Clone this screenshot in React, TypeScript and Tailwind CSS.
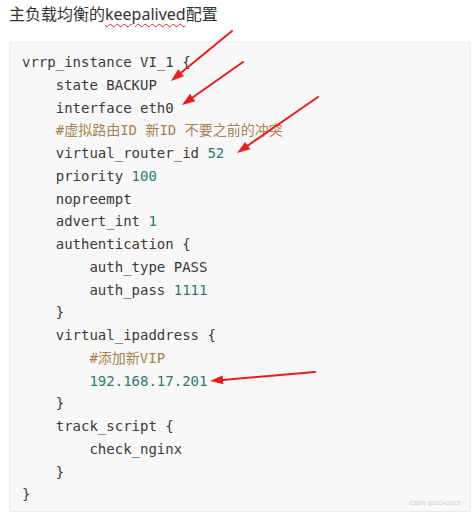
const N = 'text-[#2a7d6b]';
const C = 'text-[#a88250]';

type Seg = { t: string; c?: string };

const lines: Seg[][] = [
  [{ t: 'vrrp_instance VI_1 {' }],
  [{ t: '    state BACKUP' }],
  [{ t: '    interface eth0' }],
  [{ t: '    #虚拟路由ID 新ID 不要之前的冲突', c: C }],
  [{ t: '    virtual_router_id ' }, { t: '52', c: N }],
  [{ t: '    priority ' }, { t: '100', c: N }],
  [{ t: '    nopreempt' }],
  [{ t: '    advert_int ' }, { t: '1', c: N }],
  [{ t: '    authentication {' }],
  [{ t: '        auth_type PASS' }],
  [{ t: '        auth_pass ' }, { t: '1111', c: N }],
  [{ t: '    }' }],
  [{ t: '    virtual_ipaddress {' }],
  [{ t: '        #添加新VIP', c: C }],
  [{ t: '        192.168.17.201', c: N }],
  [{ t: '    }' }],
  [{ t: '    track_script {' }],
  [{ t: '        check_nginx' }],
  [{ t: '    }' }],
  [{ t: '}' }],
];

function Arrow({ x1, y1, x2, y2 }: { x1: number; y1: number; x2: number; y2: number }) {
  const a = Math.atan2(y2 - y1, x2 - x1);
  const len = 13;
  const w = 4.5;
  const bx = x2 - len * Math.cos(a);
  const by = y2 - len * Math.sin(a);
  const px = -Math.sin(a) * w;
  const py = Math.cos(a) * w;
  return (
    <g>
      <line x1={x1} y1={y1} x2={bx} y2={by} stroke="#ee1c1c" strokeWidth="2" strokeLinecap="round" />
      <polygon points={`${x2},${y2} ${bx + px},${by + py} ${bx - px},${by - py}`} fill="#ee1c1c" />
    </g>
  );
}

export default function App() {
  return (
    <div className="relative w-[474px] h-[516px] bg-white overflow-hidden">
      <div className="pl-[9px] pt-[2px] h-[42px] text-[16px] leading-[24px] text-[#333] font-['Noto_Sans','Noto_Sans_CJK_SC',sans-serif]">
        主负载均衡的
        <span className="underline decoration-wavy decoration-[#e02020] decoration-1 underline-offset-[3px]">keepalived</span>
        配置
      </div>
      <div className="ml-[9px] w-[462px] h-[470px] bg-[#f8f8f8] border border-[#ececec] rounded-[2px] pl-[12px] pt-[8px] relative">
        <pre className="font-['DejaVu_Sans_Mono','Noto_Sans_CJK_SC',monospace] text-[14px] leading-[22.75px] text-[#3a3a3a]">
          {lines.map((segs, i) => (
            <div key={i}>
              {segs.map((s, j) => (
                <span key={j} className={s.c}>{s.t}</span>
              ))}
            </div>
          ))}
        </pre>
        <div className="absolute right-[10px] bottom-[3px] text-[6px] text-[#c8c8c8] font-['Liberation_Sans',sans-serif]">CSDN @CCH2023</div>
      </div>
      <svg className="absolute inset-0 pointer-events-none" width="474" height="516">
        <Arrow x1={232} y1={31} x2={171} y2={81} />
        <Arrow x1={243} y1={62} x2={182} y2={105} />
        <Arrow x1={318} y1={97} x2={237} y2={153} />
        <Arrow x1={315} y1={372} x2={210} y2={381} />
      </svg>
    </div>
  );
}
